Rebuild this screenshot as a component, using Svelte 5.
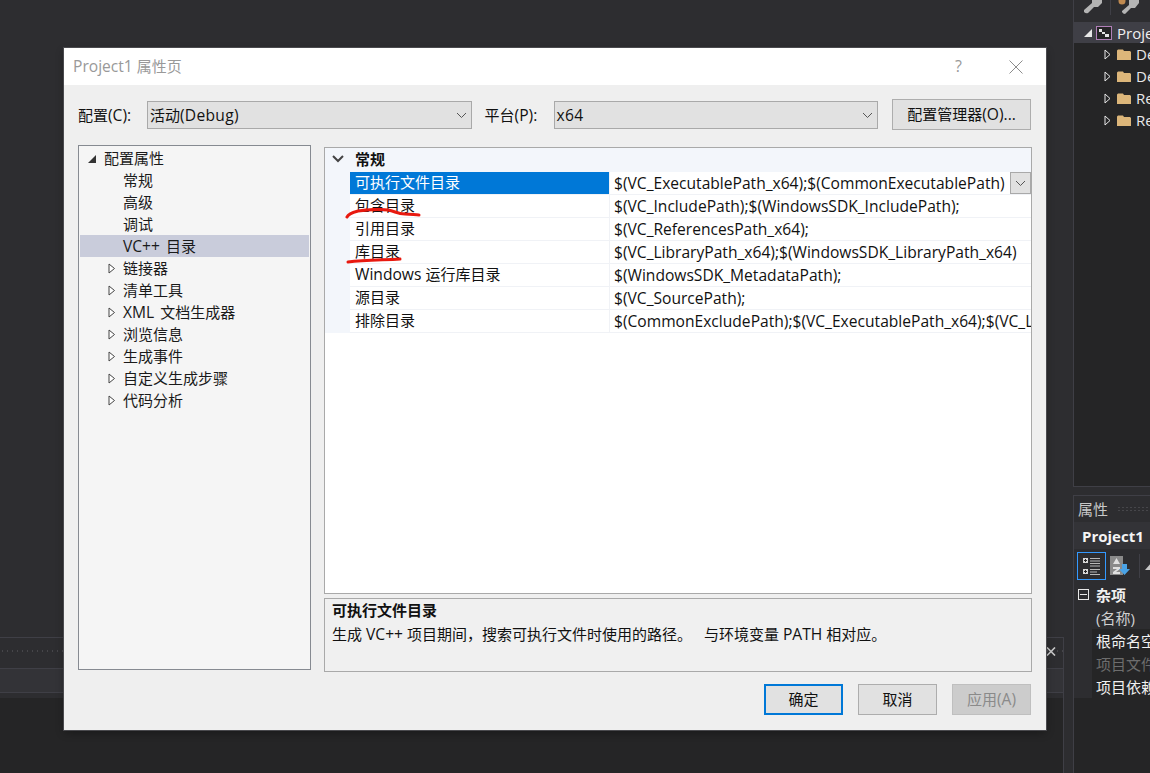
<script>
  const tree = [
    { label: "常规", kind: "leaf" },
    { label: "高级", kind: "leaf" },
    { label: "调试", kind: "leaf" },
    { label: "VC++ 目录", kind: "leaf", selected: true },
    { label: "链接器" },
    { label: "清单工具" },
    { label: "XML 文档生成器" },
    { label: "浏览信息" },
    { label: "生成事件" },
    { label: "自定义生成步骤" },
    { label: "代码分析" },
  ];

  const rows = [
    ["可执行文件目录", "$(VC_ExecutablePath_x64);$(CommonExecutablePath)"],
    ["包含目录", "$(VC_IncludePath);$(WindowsSDK_IncludePath);"],
    ["引用目录", "$(VC_ReferencesPath_x64);"],
    ["库目录", "$(VC_LibraryPath_x64);$(WindowsSDK_LibraryPath_x64)"],
    ["Windows 运行库目录", "$(WindowsSDK_MetadataPath);"],
    ["源目录", "$(VC_SourcePath);"],
    ["排除目录", "$(CommonExcludePath);$(VC_ExecutablePath_x64);$(VC_LibraryPath_x64);$(VC_SourcePath)"],
  ];

  const solution = ["De", "De", "Re", "Re"];

  // latin runs get a slightly larger size, the fallback is narrower than the original UI font
  const parts = (s) => s.split(/([\x00-\x7f]+)/).filter(Boolean);
  const isLatin = (s) => /^[\x00-\x7f]+$/.test(s);
</script>

{#snippet txt(s)}{#each parts(s) as p}{#if isLatin(p)}<span class="en">{p}</span>{:else}{p}{/if}{/each}{/snippet}

<div class="ide">
  <div class="output">
    <div class="grip"></div>
    <div class="tabs"></div>
  </div>

  <aside class="side">
    <div class="explorer">
      <div class="toolbar">
        <svg class="wrench" width="20" height="14" viewBox="0 0 20 14"><path d="M1 10L9 3V0H19V3L15 7H11L5 13Q3 14 1 12Z" fill="#b4b4b4" /></svg>
        <i class="sep"></i>
        <svg class="wrench" width="22" height="14" viewBox="0 0 22 14"><path d="M4 11L11 5V0H21V3L17 8H13L7 14Q5 14 4 12Z" fill="#b4b4b4" /><circle cx="4" cy="1" r="3.5" fill="#c08a50" /></svg>
      </div>
      <div class="project">
        <span class="tri-open"></span>
        <svg class="proj-icon" width="16" height="14" viewBox="0 0 16 14"><rect x="0.5" y="0.5" width="15" height="13" fill="#252526" stroke="#b180b8" /><path d="M3 3h3v3H3zM6 6h3v2H6zM9 8h4v3H9z" fill="#e4e4e4" /></svg>
        <span>Proje</span>
      </div>
      {#each solution as name}
        <div class="folder-row">
          <svg class="tri" width="7" height="11" viewBox="0 0 7 11"><path d="M1 1l5 4.500L1 10z" fill="#252526" stroke="#e8e8e8" /></svg>
          <svg class="folder" width="14" height="11" viewBox="0 0 14 11"><path d="M0 1.500L1 0.500H6L7 2H13L14 3V11H0Z" fill="#dcb67a" /></svg>
          <span>{name}</span>
        </div>
      {/each}
    </div>
    <div class="props">
      <div class="props-head"><span>属性</span><i class="dots"></i></div>
      <div class="props-name">Project1</div>
      <div class="props-tools">
        <span class="tool-on">
          <svg width="19" height="19" viewBox="0 0 19 19"><path d="M1 1h5v5H1zM1 12h5v5H1z" fill="#d8d8d8" /><path d="M2 3.500h3M3.500 2v3M2 14.500h3M3.500 13v3" stroke="#252526" /><path d="M8 1.500h10M8 4h10M8 6.500h10M8 9h10M8 12.500h10M8 15h7M8 17.500h10" stroke="#b8b8b8" /></svg>
        </span>
        <svg class="sort" width="22" height="22" viewBox="0 0 22 22"><rect x="1" y="1" width="13" height="19" fill="#8a8a8a" /><path d="M4 9l3.500-6L11 9zM4 12h7v2l-4 3h4v2H4v-2l4-3H4z" fill="#e0e0e0" /><path d="M13 9h5v5h3l-5.500 6L10 14h3z" fill="#4aa3e6" /></svg>
        <i class="sep tall"></i>
        <svg class="cut" width="8" height="12" viewBox="0 0 8 12"><path d="M0 10L6 3L8 2V10Z" fill="#c8c8c8" /></svg>
      </div>
      <div class="cat"><span class="minus"></span><b>杂项</b></div>
      <div class="prop">(名称)</div>
      <div class="prop dark">根命名空间</div>
      <div class="prop dark dim">项目文件</div>
      <div class="prop dark">项目依赖项</div>
    </div>
  </aside>

  <svg class="stray-x" width="10" height="9" viewBox="0 0 10 9"><path d="M1 0.500L9 8.500M9 0.500L1 8.500" stroke="#c8c8c8" stroke-width="1.600" /></svg>

  <div class="dialog">
    <header class="title">
      <span>{@render txt("Project1 属性页")}</span>
      <span class="help">?</span>
      <svg class="close" width="14" height="14" viewBox="0 0 14 14"><path d="M0.500 0.500L13.500 13.500M13.500 0.500L0.500 13.500" stroke="#8c8c8c" /></svg>
    </header>

    <div class="body">
      <div class="config">
        <span class="lab-c">{@render txt("配置(C):")}</span>
        <div class="select s1">{@render txt("活动(Debug)")}<svg class="chev" width="11" height="7" viewBox="0 0 11 7"><path d="M1 1l4.500 4.500L10 1" fill="none" stroke="#555" /></svg></div>
        <span class="lab-p">{@render txt("平台(P):")}</span>
        <div class="select s2">{@render txt("x64")}<svg class="chev" width="11" height="7" viewBox="0 0 11 7"><path d="M1 1l4.500 4.500L10 1" fill="none" stroke="#555" /></svg></div>
        <button class="manager">{@render txt("配置管理器(O)...")}</button>
      </div>

      <div class="main">
        <nav class="tree">
          <div class="node root"><span class="tri-root"></span>配置属性</div>
          {#each tree as item}
            <div class="node" class:selected={item.selected}>
              {#if item.kind !== "leaf"}<svg class="arrow" width="8" height="11" viewBox="0 0 8 11"><path d="M1 1l5.500 4.500L1 10z" fill="#fff" stroke="#444" /></svg>{/if}
              <span class="node-label">{@render txt(item.label)}</span>
            </div>
          {/each}
        </nav>

        <div class="right">
          <div class="grid">
            <div class="cat-row">
              <svg width="12" height="8" viewBox="0 0 12 8"><path d="M1 1l5 5 5-5" fill="none" stroke="#444" stroke-width="2" /></svg>
              <b>常规</b>
            </div>
            {#each rows as row, i}
              <div class="row">
                <div class="gutter"></div>
                <div class="name" class:active={i === 0}>{@render txt(row[0])}</div>
                <div class="value"><span class="en">{row[1]}</span></div>
                {#if i === 0}
                  <span class="drop"><svg width="11" height="7" viewBox="0 0 11 7"><path d="M1 1l4.500 4.500L10 1" fill="none" stroke="#555" /></svg></span>
                {/if}
              </div>
            {/each}
            <svg class="marks" width="80" height="60" viewBox="0 0 80 60">
              <path d="M2 9C4 5 9 4 13 3C26 1 34 1 43 2C50 3 52 6 60 6C66 6 70 7 74 7" fill="none" stroke="#e8190f" stroke-width="3" stroke-linecap="round" />
              <path d="M3 54C20 52 40 52 55 51" fill="none" stroke="#e8190f" stroke-width="3" stroke-linecap="round" />
            </svg>
          </div>
          <div class="desc">
            <b>可执行文件目录</b>
            <p>{@render txt("生成 VC++ 项目期间，搜索可执行文件时使用的路径。")}&nbsp;&nbsp;<span class="gap">{@render txt("与环境变量 PATH 相对应。")}</span></p>
          </div>
        </div>
      </div>

      <div class="actions">
        <button class="primary">确定</button>
        <button>取消</button>
        <button class="disabled">{@render txt("应用(A)")}</button>
      </div>
    </div>
  </div>
</div>

<style>
  :global(body) {
    margin: 0;
    overflow: hidden;
    background: #252526;
  }
  .ide {
    position: relative;
    width: 1150px;
    height: 773px;
    background: #2d2d30;
    overflow: hidden;
    font-family: "Open Sans", "Noto Sans CJK SC", sans-serif;
    font-size: 15px;
    line-height: 22px;
    color: #111;
  }
  .en {
    font-size: 15.6px;
  }
  .output {
    position: absolute;
    left: 0;
    width: 1064px;
    top: 637px;
    bottom: 0;
    box-sizing: border-box;
    background: #252526;
    border-top: 1px solid #3f3f46;
    border-right: 1px solid #3f3f46;
  }
  .grip {
    height: 30px;
    background: #2d2d30;
    border-bottom: 1px solid #3f3f46;
    background-image: radial-gradient(#46464a 1px, transparent 1px);
    background-size: 5px 4px;
    background-position: 0 11px;
    background-repeat: repeat-x;
  }
  .tabs {
    height: 23px;
    background: #333337;
    border-bottom: 1px solid #3f3f46;
    box-shadow: 0 5px 0 #2d2d30;
  }
  .side {
    position: absolute;
    left: 1073px;
    top: 0;
    width: 77px;
    height: 773px;
    display: flex;
    flex-direction: column;
    box-sizing: border-box;
    background: #2d2d30;
    color: #f0f0f0;
    overflow: hidden;
    white-space: nowrap;
  }
  .explorer {
    height: 487px;
    flex: none;
    box-sizing: border-box;
    background: #252526;
    border-left: 1px solid #3f3f46;
    border-bottom: 1px solid #3f3f46;
  }
  .toolbar {
    height: 22px;
    background: #2d2d30;
    display: flex;
    align-items: flex-start;
    gap: 7px;
    padding-left: 9px;
  }
  .wrench {
    flex: none;
  }
  .sep {
    width: 1px;
    height: 15px;
    flex: none;
    background: #3f3f46;
  }
  .project {
    height: 21px;
    background: #3f3f46;
    display: flex;
    align-items: center;
    padding-left: 10px;
  }
  .tri-open {
    width: 0;
    height: 0;
    flex: none;
    border-left: 8px solid transparent;
    border-bottom: 8px solid #e8e8e8;
    margin-right: 4px;
  }
  .proj-icon {
    flex: none;
    margin-right: 5px;
  }
  .folder-row {
    height: 22px;
    display: flex;
    align-items: center;
    padding-left: 30px;
    color: #e8e8e8;
  }
  .tri {
    flex: none;
    margin-right: 6px;
  }
  .folder {
    flex: none;
    margin-right: 5px;
  }
  .props {
    flex: 1;
    margin-top: 8px;
    border-top: 1px solid #3f3f46;
    border-left: 1px solid #3f3f46;
    background: #252526;
  }
  .props-head {
    height: 26px;
    display: flex;
    align-items: center;
    gap: 9px;
    padding-left: 4px;
    color: #c8c8c8;
    background: #2d2d30;
  }
  .dots {
    flex: 1;
    height: 6px;
    background-image: radial-gradient(#46464a 1px, transparent 1px);
    background-size: 4px 3px;
  }
  .props-name {
    height: 27px;
    line-height: 28px;
    padding-left: 8px;
    font-weight: 700;
    background: #333337;
    color: #f5f5f5;
  }
  .props-tools {
    height: 34px;
    display: flex;
    align-items: center;
    padding-left: 3px;
    background: #2d2d30;
  }
  .tool-on {
    width: 29px;
    height: 28px;
    flex: none;
    box-sizing: border-box;
    border: 1px solid #3399ff;
    display: flex;
    align-items: center;
    justify-content: center;
  }
  .sort {
    flex: none;
    margin-left: 3px;
  }
  .sep.tall {
    height: 24px;
    margin-left: 8px;
  }
  .cut {
    flex: none;
    margin-left: 5px;
  }
  .cat {
    height: 23px;
    display: flex;
    align-items: center;
    gap: 7px;
    padding-left: 4px;
    background: #2d2d30;
  }
  .minus {
    width: 9px;
    height: 9px;
    flex: none;
    border: 1px solid #e8e8e8;
    background: linear-gradient(#e8e8e8, #e8e8e8) center / 7px 1px no-repeat;
  }
  .prop {
    height: 23px;
    line-height: 24px;
    padding-left: 22px;
    color: #d0d0d0;
    background: #2d2d30;
  }
  .prop.dark {
    padding-left: 4px;
    margin-left: 18px;
    background: #252526;
    box-shadow: -18px 0 0 #2d2d30;
    color: #f0f0f0;
  }
  .prop.dim {
    color: #6d6d6d;
  }
  .stray-x {
    position: absolute;
    left: 1046px;
    top: 647px;
  }
  .dialog {
    position: absolute;
    left: 64px;
    top: 48px;
    width: 982px;
    height: 682px;
    background: #efefef;
    box-shadow: 0 0 0 1px #4a4a4e, 0 3px 8px rgba(0, 0, 0, 0.3);
    display: flex;
    flex-direction: column;
  }
  .title {
    height: 37px;
    flex: none;
    box-sizing: border-box;
    background: #fff;
    display: flex;
    align-items: center;
    padding: 0 23px 2px 9px;
    color: #999;
  }
  .help {
    margin-left: auto;
    margin-right: 47px;
    font-size: 16px;
  }
  .close {
    margin-top: 2px;
  }
  .body {
    flex: 1;
    display: flex;
    flex-direction: column;
    padding: 14px 15px 15px 14px;
    min-height: 0;
  }
  .config {
    display: flex;
    align-items: center;
    height: 31px;
  }
  .lab-c {
    width: 69px;
  }
  .lab-p {
    padding-left: 13px;
    box-sizing: border-box;
    width: 82px;
  }
  .select {
    position: relative;
    box-sizing: border-box;
    height: 28px;
    line-height: 26px;
    border: 1px solid #a9a9a9;
    background: #e1e1e1;
    padding-left: 2px;
  }
  .select .en {
    letter-spacing: 0.3px;
  }
  .s1 {
    width: 325px;
  }
  .s2 {
    width: 325px;
    margin-right: 14px;
  }
  .chev {
    position: absolute;
    right: 4px;
    top: 10px;
  }
  button {
    font: inherit;
    color: inherit;
    width: 79px;
    height: 31px;
    padding: 0 0 2px;
    box-sizing: border-box;
    border: 1px solid #adadad;
    background: #e1e1e1;
  }
  .manager {
    width: 139px;
  }
  .main {
    flex: 1;
    display: flex;
    min-height: 0;
    margin-top: 15px;
    margin-bottom: 12px;
  }
  .tree {
    width: 233px;
    flex: none;
    box-sizing: border-box;
    border: 1px solid #868a91;
    background: #f5f5f5;
    padding: 1px 1px 0;
    margin-bottom: 2px;
    color: #1a1a1a;
  }
  .node {
    position: relative;
    height: 22px;
    padding-left: 43px;
    white-space: nowrap;
  }
  .node-label {
    word-spacing: 2px;
  }
  .node.root {
    padding-left: 24px;
  }
  .tri-root {
    position: absolute;
    left: 8px;
    top: 8px;
    width: 0;
    height: 0;
    border-left: 8px solid transparent;
    border-bottom: 8px solid #333;
  }
  .arrow {
    position: absolute;
    left: 28px;
    top: 6px;
  }
  .selected {
    background: #c9ccdb;
  }
  .right {
    margin-left: 13px;
    flex: 1;
    min-width: 0;
    display: flex;
    flex-direction: column;
    gap: 4px;
    margin-right: -1px;
  }
  .grid {
    position: relative;
    flex: 1;
    border: 1px solid #a9a9a9;
    background: #fff;
    margin-top: 2px;
    overflow: hidden;
    min-height: 0;
  }
  .cat-row {
    height: 24px;
    box-sizing: border-box;
    padding: 0 0 2px 7px;
    display: flex;
    align-items: center;
    background: #f3f6fb;
    gap: 11px;
  }
  .row {
    position: relative;
    height: 23px;
    display: flex;
    line-height: 21px;
    white-space: nowrap;
  }
  .gutter {
    width: 25px;
    flex: none;
    background: #f3f6fb;
  }
  .name {
    width: 259px;
    flex: none;
    box-sizing: border-box;
    padding-left: 5px;
    height: 22px;
  }
  .name.active {
    background: #0078d7;
    color: #fff;
  }
  .row:not(:first-of-type) .name {
    box-shadow: 0 1px 0 #f0f2f6;
  }
  .value {
    flex: 1;
    min-width: 0;
    padding-left: 4px;
    border-left: 1px solid #f0f2f6;
    overflow: hidden;
    box-shadow: 0 1px 0 #f0f2f6;
    height: 22px;
    line-height: 22px;
  }
  .drop {
    position: absolute;
    right: 0;
    top: 0;
    width: 21px;
    height: 22px;
    box-sizing: border-box;
    border: 1px solid #a9a9a9;
    background: #e1e1e1;
    display: flex;
    align-items: center;
    justify-content: center;
  }
  .marks {
    position: absolute;
    left: 20px;
    top: 60px;
    pointer-events: none;
  }
  .desc {
    height: 74px;
    flex: none;
    box-sizing: border-box;
    border: 1px solid #a9a9a9;
    background: #f0f0f0;
    padding: 0 7px;
  }
  .desc p {
    margin: 0;
    padding-top: 2px;
  }
  .gap {
    margin-left: 4px;
  }
  .actions {
    display: flex;
    justify-content: flex-end;
    gap: 15px;
    color: #111;
  }
  .primary {
    border: 2px solid #0078d7;
  }
  .disabled {
    background: #cccccc;
    border-color: #bfbfbf;
    color: #8a8a8a;
  }
</style>
